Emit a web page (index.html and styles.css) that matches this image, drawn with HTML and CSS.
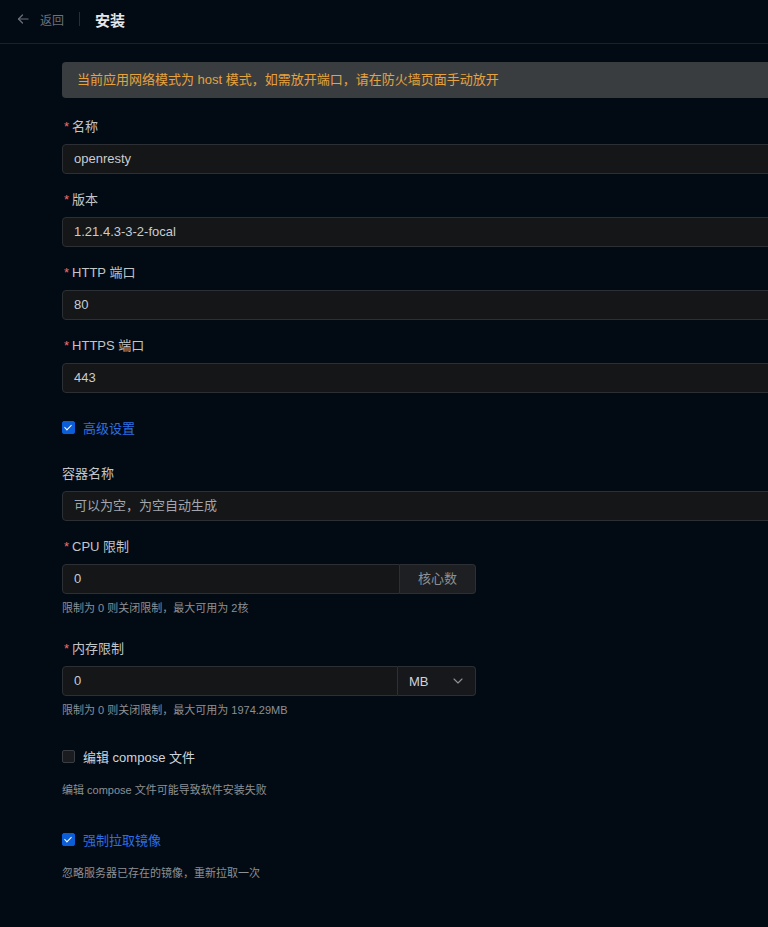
FILE: index.html
```html
<!DOCTYPE html>
<html lang="zh-CN">
<head>
    <meta charset="UTF-8">
    <meta name="viewport" content="width=device-width, initial-scale=1.0">
    <title>安装</title>
    <link rel="stylesheet" href="styles.css">
</head>
<body>
    <header class="topbar">
        <a class="back" href="#">
            <svg width="12" height="12" viewBox="0 0 12 12" fill="none" stroke="currentColor" stroke-width="1.2" stroke-linecap="round" stroke-linejoin="round">
                <path d="M11 6H1.5"/>
                <path d="M5.5 2L1.5 6l4 4"/>
            </svg>
            <span>返回</span>
        </a>
        <span class="divider"></span>
        <h1>安装</h1>
    </header>

    <main class="content">
        <div class="alert">当前应用网络模式为 host 模式，如需放开端口，请在防火墙页面手动放开</div>

        <div class="form-item">
            <label class="label required">名称</label>
            <div class="input">openresty</div>
        </div>

        <div class="form-item">
            <label class="label required">版本</label>
            <div class="input">1.21.4.3-3-2-focal</div>
        </div>

        <div class="form-item">
            <label class="label required">HTTP 端口</label>
            <div class="input">80</div>
        </div>

        <div class="form-item">
            <label class="label required">HTTPS 端口</label>
            <div class="input">443</div>
        </div>

        <div class="check-row advanced">
            <span class="checkbox checked"></span>
            <span class="check-label active">高级设置</span>
        </div>

        <div class="form-item">
            <label class="label">容器名称</label>
            <div class="input placeholder">可以为空，为空自动生成</div>
        </div>

        <div class="form-item with-help">
            <label class="label required">CPU 限制</label>
            <div class="input-group">
                <div class="input">0</div>
                <div class="addon">核心数</div>
            </div>
            <div class="help">限制为 0 则关闭限制，最大可用为 2核</div>
        </div>

        <div class="form-item with-help">
            <label class="label required">内存限制</label>
            <div class="input-group">
                <div class="input">0</div>
                <div class="select">
                    <span>MB</span>
                    <svg width="10" height="6" viewBox="0 0 10 6" fill="none" stroke="currentColor" stroke-width="1.1" stroke-linecap="round" stroke-linejoin="round">
                        <path d="M1 1l4 4 4-4"/>
                    </svg>
                </div>
            </div>
            <div class="help">限制为 0 则关闭限制，最大可用为 1974.29MB</div>
        </div>

        <div class="check-block">
            <div class="check-row">
                <span class="checkbox"></span>
                <span class="check-label">编辑 compose 文件</span>
            </div>
            <div class="help">编辑 compose 文件可能导致软件安装失败</div>
        </div>

        <div class="check-block">
            <div class="check-row">
                <span class="checkbox checked"></span>
                <span class="check-label active">强制拉取镜像</span>
            </div>
            <div class="help">忽略服务器已存在的镜像，重新拉取一次</div>
        </div>
    </main>
</body>
</html>
```

FILE: styles.css
```css
body {
    font-family: "Liberation Sans", "Noto Sans CJK SC", sans-serif;
    background-color: #020b14;
    color: #cfd3dc;
    margin: 0;
    font-size: 13px;
    overflow: hidden;
}

.topbar {
    height: 38px;
    padding-bottom: 5px;
    display: flex;
    align-items: center;
    padding-left: 17px;
    border-bottom: 1px solid #1b2227;
}

.back {
    display: flex;
    align-items: center;
    gap: 11px;
    color: #6d7178;
    text-decoration: none;
    font-size: 12px;
}

.divider {
    width: 1px;
    height: 14px;
    background-color: #2a2e33;
    margin: 0 15px;
}

h1 {
    margin: 0;
    font-size: 15px;
    font-weight: 600;
    color: #e5e7ea;
}

.content {
    padding: 18px 0 0 62px;
    width: 760px;
}

.alert {
    background-color: #3a3d40;
    color: #e6a23c;
    height: 36px;
    line-height: 36px;
    padding-left: 15px;
    border-radius: 4px 0 0 4px;
    margin-bottom: 18px;
}

.form-item {
    margin-bottom: 15px;
}

.form-item.with-help {
    margin-bottom: 21px;
}

.label {
    display: block;
    line-height: 22px;
    margin-bottom: 6px;
    color: #c3c5c9;
}

.required::before {
    content: "*";
    color: #f56c6c;
    margin-right: 3px;
    margin-left: 2px;
}

.input {
    box-sizing: border-box;
    height: 30px;
    line-height: 28px;
    padding-left: 11px;
    background-color: #141618;
    border: 1px solid #2c2f33;
    border-radius: 4px 0 0 4px;
    color: #c9ccd2;
}

.placeholder {
    color: #a3a6ad;
}

.input-group {
    display: flex;
    width: 414px;
}

.input-group .input {
    flex: 1;
}

.addon {
    box-sizing: border-box;
    width: 76px;
    height: 30px;
    line-height: 28px;
    text-align: center;
    background-color: #1d1f22;
    border: 1px solid #2c2f33;
    border-left: none;
    border-radius: 0 4px 4px 0;
    color: #8d9095;
}

.select {
    box-sizing: border-box;
    width: 78px;
    height: 30px;
    display: flex;
    align-items: center;
    justify-content: space-between;
    padding: 0 12px 0 11px;
    background-color: #16181b;
    border: 1px solid #2c2f33;
    border-left: none;
    border-radius: 0 4px 4px 0;
    color: #cfd3dc;
}

.select svg {
    color: #8d9095;
}

.help {
    font-size: 11px;
    line-height: 18px;
    padding-top: 5px;
    color: #8d9095;
}

.check-row {
    display: flex;
    align-items: center;
    height: 32px;
}

.check-row.advanced {
    margin-top: 18px;
    margin-bottom: 20px;
}

.checkbox {
    box-sizing: border-box;
    width: 13px;
    height: 13px;
    border: 1px solid #3a3d42;
    border-radius: 2px;
    background-color: #1a1c1f;
    margin-right: 8px;
    position: relative;
}

.checkbox.checked {
    background-color: #0b5ed7;
    border-color: #0b5ed7;
}

.checkbox.checked::after {
    content: "";
    position: absolute;
    left: 3px;
    top: 1px;
    width: 3px;
    height: 6px;
    border: solid #ffffff;
    border-width: 0 1.5px 1.5px 0;
    transform: rotate(45deg);
}

.check-label {
    color: #cfd3dc;
}

.check-label.active {
    color: #2f6fe0;
}

.check-block {
    margin-top: 17px;
}

.check-block + .check-block {
    margin-top: 24px;
}

.check-block .help {
    padding-top: 9px;
}
```
